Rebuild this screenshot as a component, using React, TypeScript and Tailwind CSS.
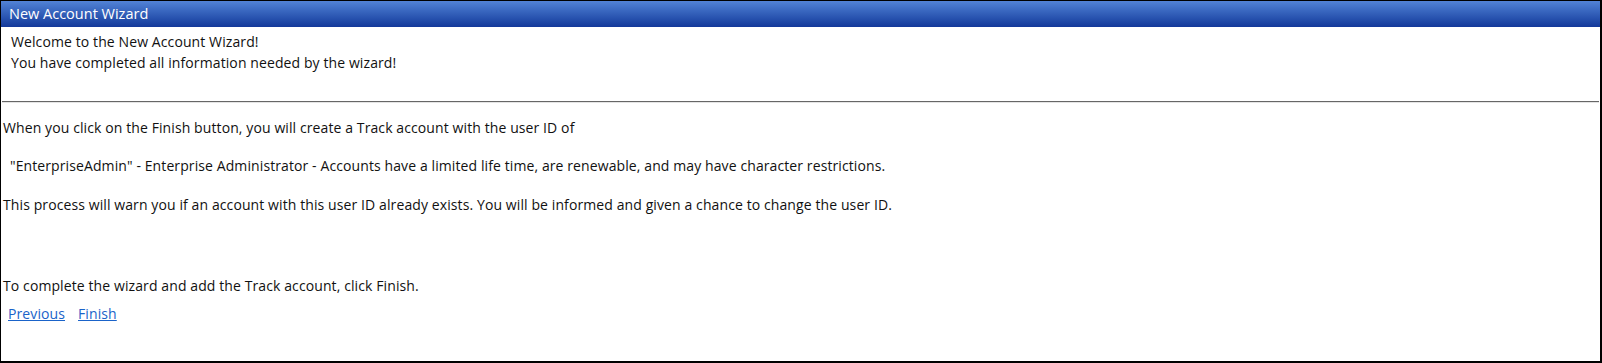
import React from "react";

function App() {
  return (
    <div className="w-[1602px] h-[363px] bg-white font-['Open_Sans','Liberation_Sans',sans-serif] text-[14px] tracking-[0.1px] text-[#111]">
      <div className="w-full h-full border-l border-t border-r-2 border-b-2 border-black flex flex-col">
        <div className="h-[26px] shrink-0 bg-gradient-to-b from-[#5283d6] to-[#14389a] text-white text-[14.5px] tracking-normal leading-[26px] pl-[8px]">
          New Account Wizard
        </div>
        <div className="pl-[10px] pt-[4px] h-[74px] shrink-0 leading-[21px]">
          <div>Welcome to the New Account Wizard!</div>
          <div>You have completed all information needed by the wizard!</div>
        </div>
        <div className="mx-[1px] h-[2px] border-t border-[#666] bg-[#e4e4e4] shrink-0" />
        <div className="pl-[2px] leading-[19px]">
          <p className="mt-[15px]">
            When you click on the Finish button, you will create a Track account with the user ID of
          </p>
          <p className="mt-[19px] pl-[7px]">
            "EnterpriseAdmin" - Enterprise Administrator - Accounts have a limited life time, are renewable, and may have character restrictions.
          </p>
          <p className="mt-[20px]">
            This process will warn you if an account with this user ID already exists. You will be informed and given a chance to change the user ID.
          </p>
          <p className="mt-[62px]">To complete the wizard and add the Track account, click Finish.</p>
          <div className="mt-[9px] pl-[5px] flex gap-[13px]">
            <a href="#" className="text-[#1a63c9] underline">
              Previous
            </a>
            <a href="#" className="text-[#1a63c9] underline">
              Finish
            </a>
          </div>
        </div>
      </div>
    </div>
  );
}

export default App;
